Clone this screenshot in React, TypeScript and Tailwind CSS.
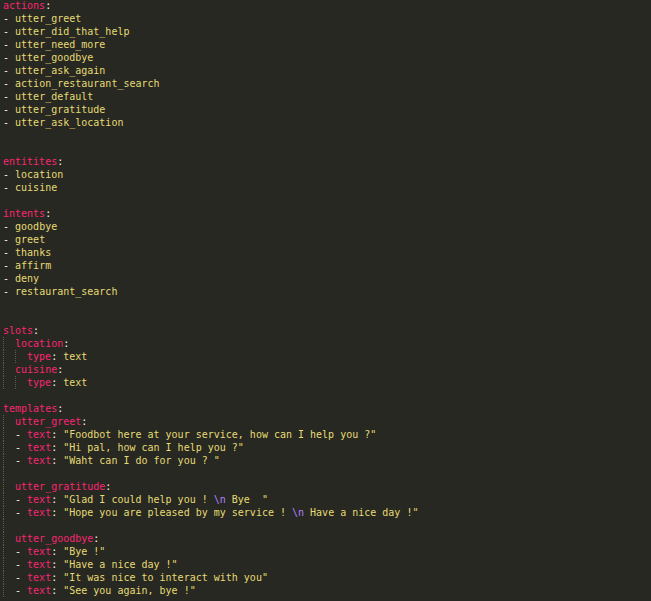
type Tok = [string, string];
type Line = { g?: number; t?: Tok[] };

const K = "text-[#f92672]";
const P = "text-[#f8f8f2]";
const S = "text-[#e6db74]";
const E = "text-[#ae81ff]";

const key = (name: string): Tok[] => [
  [K, name],
  [P, ":"],
];
const item = (v: string): Tok[] => [
  [P, "- "],
  [S, v],
];
const say = (parts: Tok[]): Tok[] => [[P, "- "], [K, "text"], [P, ": "], ...parts];

const LINES: Line[] = [
  { t: key("actions") },
  { t: item("utter_greet") },
  { t: item("utter_did_that_help") },
  { t: item("utter_need_more") },
  { t: item("utter_goodbye") },
  { t: item("utter_ask_again") },
  { t: item("action_restaurant_search") },
  { t: item("utter_default") },
  { t: item("utter_gratitude") },
  { t: item("utter_ask_location") },
  {},
  {},
  { t: key("entitites") },
  { t: item("location") },
  { t: item("cuisine") },
  {},
  { t: key("intents") },
  { t: item("goodbye") },
  { t: item("greet") },
  { t: item("thanks") },
  { t: item("affirm") },
  { t: item("deny") },
  { t: item("restaurant_search") },
  {},
  {},
  { t: key("slots") },
  { g: 1, t: key("location") },
  { g: 2, t: [[K, "type"], [P, ": "], [S, "text"]] },
  { g: 1, t: key("cuisine") },
  { g: 2, t: [[K, "type"], [P, ": "], [S, "text"]] },
  {},
  { t: key("templates") },
  { g: 1, t: key("utter_greet") },
  { g: 1, t: say([[S, '"Foodbot here at your service, how can I help you ?"']]) },
  { g: 1, t: say([[S, '"Hi pal, how can I help you ?"']]) },
  { g: 1, t: say([[S, '"Waht can I do for you ? "']]) },
  { g: 1 },
  { g: 1, t: key("utter_gratitude") },
  { g: 1, t: say([[S, '"Glad I could help you ! '], [E, "\\n"], [S, ' Bye  "']]) },
  {
    g: 1,
    t: say([
      [S, '"Hope you are pleased by my service ! '],
      [E, "\\n"],
      [S, ' Have a nice day !"'],
    ]),
  },
  { g: 1 },
  { g: 1, t: key("utter_goodbye") },
  { g: 1, t: say([[S, '"Bye !"']]) },
  { g: 1, t: say([[S, '"Have a nice day !"']]) },
  { g: 1, t: say([[S, '"It was nice to interact with you"']]) },
  { g: 1, t: say([[S, '"See you again, bye !"']]) },
];

function CodeLine({ line }: { line: Line }) {
  const guides = Array.from({ length: line.g ?? 0 });
  return (
    <div className="flex h-[13px] items-center whitespace-pre">
      {guides.map((_, i) => (
        <span
          key={i}
          className="inline-block h-[13px] w-[2ch] shrink-0 border-l border-dotted border-[#5b5c55]"
        />
      ))}
      {line.t?.map(([cls, text], i) => (
        <span key={i} className={cls}>
          {text}
        </span>
      ))}
    </div>
  );
}

export default function App() {
  return (
    <div className="h-[601px] w-[651px] overflow-hidden bg-[#272822]">
      <div
        className="-mt-[1px] pl-[3px] text-[10px] leading-[13px] text-[#f8f8f2]"
        style={{ fontFamily: '"DejaVu Sans Mono", monospace' }}
      >
        {LINES.map((line, i) => (
          <CodeLine key={i} line={line} />
        ))}
      </div>
    </div>
  );
}
